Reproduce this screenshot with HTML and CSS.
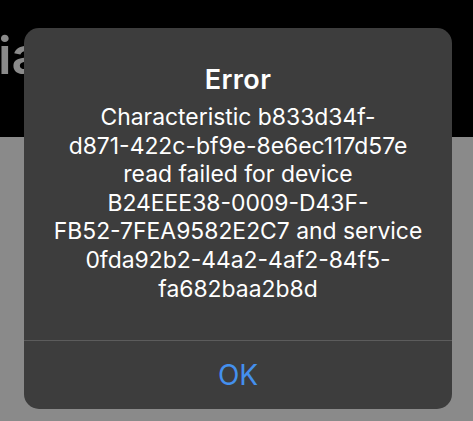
FILE: index.html
```html
<!DOCTYPE html>
<html>
<head>
<meta charset="utf-8">
<link rel="stylesheet" href="styles.css">
</head>
<body>
<div class="screen">
  <header class="top">
    <h1 class="page-title">ia</h1>
  </header>
  <main class="below"></main>
</div>
<div class="alert" role="alertdialog">
  <div class="alert-content">
    <h2 class="alert-title">Error</h2>
    <p class="alert-message">Characteristic b833d34f-<br>d871-422c-bf9e-8e6ec117d57e<br>read failed for device<br>B24EEE38-0009-D43F-<br>FB52-7FEA9582E2C7 and service<br>0fda92b2-44a2-4af2-84f5-<br>fa682baa2b8d</p>
  </div>
  <div class="alert-actions">
    <button class="alert-button">OK</button>
  </div>
</div>
</body>
</html>
```
FILE: styles.css
```css
html, body {
  margin: 0;
  padding: 0;
  height: 100%;
}
body {
  font-family: Inter, "Noto Sans", sans-serif;
  background: #8a8a8a;
  overflow: hidden;
}
.screen {
  display: flex;
  flex-direction: column;
  height: 421px;
}
.top {
  height: 137px;
  background: #000;
  flex: none;
}
.page-title {
  margin: 0;
  padding-top: 24px;
  margin-left: -2px;
  font-size: 52px;
  font-weight: 600;
  color: #8a8a8a;
  line-height: 64px;
}
.below {
  flex: 1;
  background: #8a8a8a;
}
.alert {
  position: absolute;
  left: 24px;
  top: 28px;
  width: 428px;
  height: 381px;
  background: #3d3d3d;
  border-radius: 15px;
  display: flex;
  flex-direction: column;
  color: #fff;
}
.alert-content {
  height: 312px;
  box-sizing: border-box;
  padding-top: 36px;
  text-align: center;
}
.alert-title {
  margin: 0;
  font-size: 27px;
  font-weight: 600;
  letter-spacing: 0.4px;
  line-height: 32px;
}
.alert-message {
  margin: 7px 0 0;
  font-size: 22.9px;
  font-weight: 400;
  line-height: 28.6px;
}
.alert-actions {
  flex: 1;
  border-top: 1px solid #5c5c5c;
  display: flex;
  align-items: center;
  justify-content: center;
}
.alert-button {
  background: none;
  border: none;
  padding: 0;
  font-family: inherit;
  font-size: 28px;
  color: #4490ee;
  line-height: 32px;
}
```
